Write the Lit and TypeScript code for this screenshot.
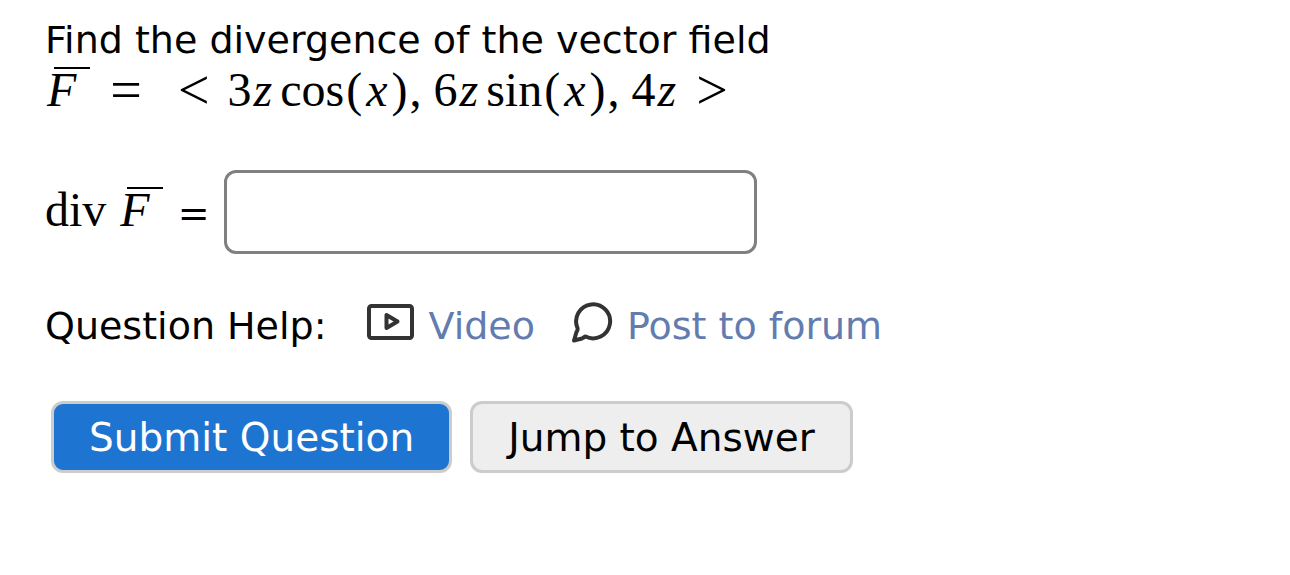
import { LitElement, html, css } from "lit";
import { customElement, state } from "lit/decorators.js";

@customElement("app-root")
export class AppRoot extends LitElement {
  @state() private answer = "";

  static styles = css`
    :host {
      display: block;
      background: #fff;
      color: #000;
      font-family: Verdana, "DejaVu Sans", sans-serif;
      font-size: 38px;
      line-height: 48px;
    }
    form {
      display: flex;
      flex-direction: column;
      padding: 16px 45px;
    }
    p {
      margin: 0;
    }
    .math {
      display: flex;
      align-items: baseline;
      font-family: "Liberation Serif", serif;
      font-size: 48px;
      line-height: 52px;
      white-space: pre;
    }
    .math i,
    .paren {
      margin: 0 2px;
    }
    .math .vec {
      background: linear-gradient(#000, #000) 7px 3px / 36px 2px no-repeat;
      padding-right: 14px;
    }
    .rel {
      align-self: center;
      font-size: 56px;
      margin: 0 18px;
    }
    .fn {
      margin-left: 6px;
    }
    .comma {
      margin-right: 12px;
    }
    .answer {
      display: flex;
      align-items: center;
      margin-top: 54px;
      gap: 14px;
    }
    .answer label {
      display: flex;
      align-items: baseline;
      gap: 12px;
      padding-bottom: 4px;
    }
    input {
      box-sizing: border-box;
      width: 533px;
      max-width: 100%;
      height: 84px;
      border: 3px solid #808080;
      border-radius: 12px;
      padding: 8px 16px;
      font: inherit;
      outline: none;
      background: #fff;
    }
    .help {
      display: flex;
      align-items: center;
      margin-top: 47px;
    }
    .caption {
      margin-right: 4px;
    }
    a {
      display: flex;
      align-items: center;
      color: #627cb0;
      text-decoration: none;
      margin-left: 36px;
      gap: 14px;
    }
    svg {
      display: block;
      flex: none;
      margin-bottom: 8px;
      fill: none;
      stroke: #333;
      stroke-width: 4;
      stroke-linejoin: round;
      stroke-linecap: round;
    }
    .actions {
      display: flex;
      gap: 18px;
      margin-top: 50px;
      padding-left: 6px;
    }
    button {
      font: inherit;
      font-size: 39px;
      color: #000;
      background: #eee;
      border: 3px solid #ccc;
      border-radius: 12px;
      padding: 10px 35px 8px;
      cursor: pointer;
    }
    .primary {
      color: #fff;
      background: #1e74d1;
    }
  `;

  private onInput(e: Event) {
    this.answer = (e.target as HTMLInputElement).value;
  }

  render() {
    return html`
      <form @submit=${(e: Event) => e.preventDefault()}>
        <p>Find the divergence of the vector field</p>
        <p class="math">
          <i class="vec">F</i><span class="rel">=</span><span class="rel">&lt;</span
          ><span>3</span><i>z</i><span class="fn">cos</span><span class="paren">(</span><i>x</i
          ><span class="paren">)</span><span class="comma">,</span><span>6</span><i>z</i
          ><span class="fn">sin</span><span class="paren">(</span><i>x</i><span class="paren">)</span
          ><span class="comma">,</span><span>4</span><i>z</i><span class="rel">&gt;</span>
        </p>
        <div class="answer">
          <label for="answer"
            ><span class="math">div <i class="vec">F</i></span><span>=</span></label
          >
          <input id="answer" type="text" autocomplete="off" .value=${this.answer} @input=${this.onInput} />
        </div>
        <div class="help">
          <span class="caption">Question Help:</span>
          <a href="#video">
            <svg width="48" height="40" viewBox="0 0 48 40" aria-hidden="true">
              <rect x="3" y="4" width="43" height="32" rx="2.500" />
              <path d="M20.500 13v13l11-6.500z" />
            </svg>
            Video</a
          >
          <a href="#forum">
            <svg width="42" height="42" viewBox="0 0 42 42" aria-hidden="true">
              <path d="M3 39.500 5.500 31Q7 29 6.500 27A17 17 0 1 1 14.500 35.500Q13 36 11 37.500Z" />
            </svg>
            Post to forum</a
          >
        </div>
        <div class="actions">
          <button type="submit" class="primary">Submit Question</button>
          <button type="button">Jump to Answer</button>
        </div>
      </form>
    `;
  }
}
